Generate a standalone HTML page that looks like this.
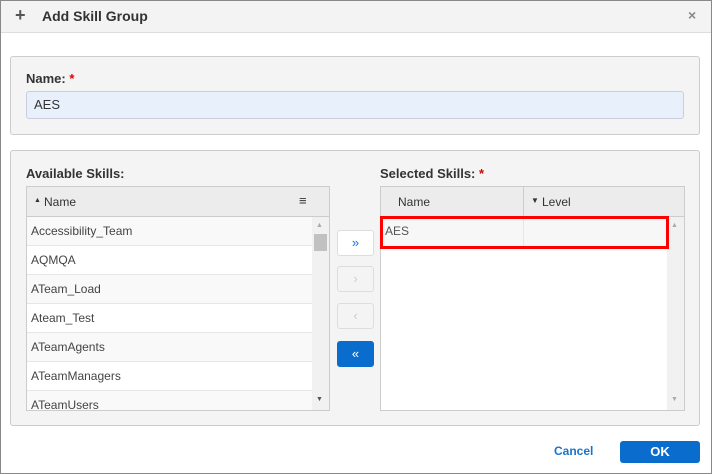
<!DOCTYPE html>
<html><head><style>
*{box-sizing:border-box;margin:0;padding:0}
body{width:712px;height:474px;overflow:hidden;background:#fff;font-family:"Liberation Sans",Arial,sans-serif;font-size:12px;color:#333;position:relative}
.a{position:absolute}
.frame{left:0;top:0;width:712px;height:474px;border:1px solid #888}
.hdr{left:1px;top:1px;width:710px;height:32px;background:#f3f3f3;border-bottom:1px solid #ddd}
.panel{background:#f4f4f4;border:1px solid #ccc;border-radius:3px}
.lbl{font-weight:bold;font-size:13px;color:#333}
.req{color:#d00}
.tbl{border:1px solid #ccc;background:#fff;overflow:hidden}
.th{background:#ececec;height:30px;border-bottom:1px solid #ccc}
.row{position:absolute;left:0;height:29px;border-bottom:1px solid #e6e6e6;line-height:28px;padding-left:4px;font-size:12px;color:#444}
.btn{width:37px;height:26px;border:1px solid #ddd;border-radius:3px;background:#f4f4f4;text-align:center;line-height:24px;color:#ccc;font-size:13px}
</style></head><body>
<div class="a frame"></div>
<div class="a hdr"></div>
<div class="a" style="left:15px;top:5px;font-size:18px;font-weight:bold;color:#555">+</div>
<div class="a" style="left:42px;top:8px;font-size:14px;font-weight:bold;color:#333">Add Skill Group</div>
<div class="a" style="left:688px;top:7px;font-size:14px;color:#888;font-weight:bold">×</div>

<div class="a panel" style="left:10px;top:56px;width:690px;height:79px"></div>
<div class="a lbl" style="left:26px;top:71px">Name: <span class="req">*</span></div>
<div class="a" style="left:26px;top:91px;width:658px;height:28px;background:#e8f0fc;border:1px solid #ccd;border-radius:3px;padding-left:7px;line-height:26px;font-size:13px">AES</div>

<div class="a panel" style="left:10px;top:150px;width:690px;height:276px"></div>
<div class="a lbl" style="left:26px;top:166px">Available Skills:</div>
<div class="a tbl" style="left:26px;top:186px;width:304px;height:225px">
 <div class="th" style="position:relative"><span class="a" style="left:7px;top:10px;font-size:7px">▲</span><span class="a" style="left:17px;top:8px">Name</span><span class="a" style="left:272px;top:6px;font-size:13px">≡</span></div>
 <div style="position:absolute;left:0;top:30px;width:286px;height:200px">
  <div class="row" style="top:0;width:286px;background:#f9f9f9">Accessibility_Team</div>
  <div class="row" style="top:29px;width:286px">AQMQA</div>
  <div class="row" style="top:58px;width:286px;background:#f9f9f9">ATeam_Load</div>
  <div class="row" style="top:87px;width:286px">Ateam_Test</div>
  <div class="row" style="top:116px;width:286px;background:#f9f9f9">ATeamAgents</div>
  <div class="row" style="top:145px;width:286px">ATeamManagers</div>
  <div class="row" style="top:174px;width:286px;background:#f9f9f9">ATeamUsers</div>
 </div>
 <div class="a" style="left:285px;top:30px;width:17px;height:194px;background:#f1f1f1"></div>
 <div class="a" style="left:287px;top:47px;width:13px;height:17px;background:#c1c1c1"></div>
 <div class="a" style="left:289px;top:35px;font-size:7px;color:#aaa">▲</div>
 <div class="a" style="left:289px;top:209px;font-size:7px;color:#555">▼</div>
</div>

<div class="a btn" style="left:337px;top:230px;background:#fff;color:#1a73d0">»</div>
<div class="a btn" style="left:337px;top:266px">›</div>
<div class="a btn" style="left:337px;top:303px">‹</div>
<div class="a btn" style="left:337px;top:341px;background:#0a6ccd;border-color:#0a6ccd;color:#fff">«</div>

<div class="a lbl" style="left:380px;top:166px">Selected Skills: <span class="req">*</span></div>
<div class="a tbl" style="left:380px;top:186px;width:305px;height:225px">
 <div class="th" style="position:relative"><span class="a" style="left:17px;top:8px">Name</span><span class="a" style="left:142px;top:0;width:1px;height:30px;background:#ccc"></span><span class="a" style="left:150px;top:9px;font-size:8px">▼</span><span class="a" style="left:161px;top:8px">Level</span></div>
 <div class="a" style="left:0;top:30px;width:286px;height:31px;background:#f7f7f7"></div>
 <div class="a" style="left:142px;top:30px;width:1px;height:31px;background:#e6e6e6"></div>
 <div class="a" style="left:4px;top:37px;color:#555">AES</div>
 <div class="a" style="left:286px;top:30px;width:17px;height:194px;background:#f1f1f1"></div>
 <div class="a" style="left:290px;top:35px;font-size:7px;color:#aaa">▲</div>
 <div class="a" style="left:290px;top:209px;font-size:7px;color:#aaa">▼</div>
</div>
<div class="a" style="left:380px;top:216px;width:289px;height:33px;border:3px solid #f00"></div>

<div class="a" style="left:554px;top:444px;font-size:12px;font-weight:bold;color:#1a73c8">Cancel</div>
<div class="a" style="left:620px;top:441px;width:80px;height:22px;background:#0a6ccd;border-radius:3px;color:#fff;font-weight:bold;text-align:center;line-height:22px;font-size:13px">OK</div>
</body></html>
